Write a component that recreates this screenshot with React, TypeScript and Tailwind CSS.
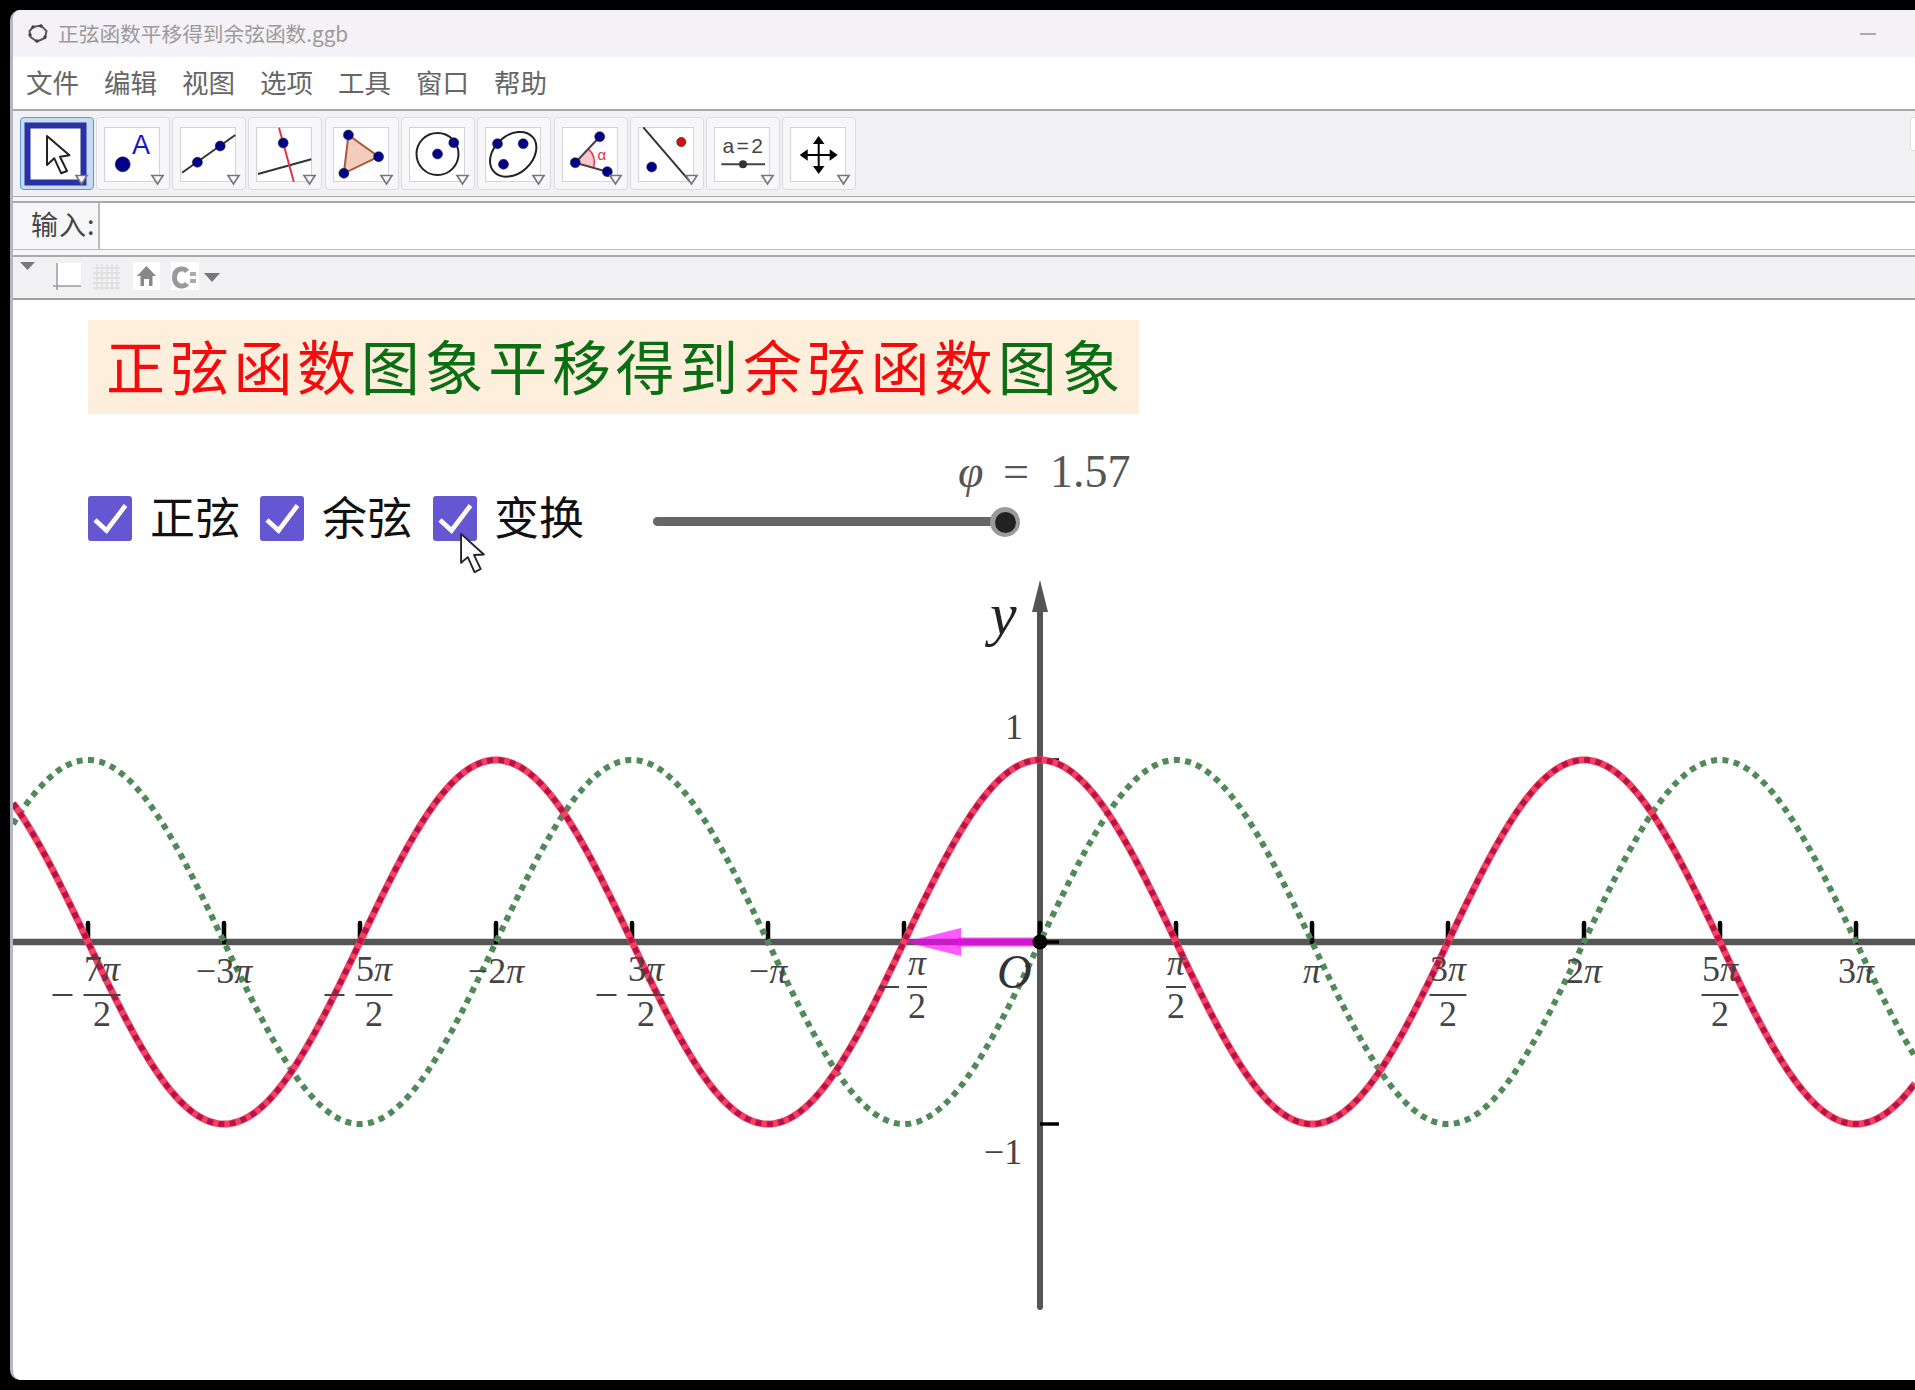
import React from "react";

const CJK = "font-['Noto_Sans_CJK_SC',sans-serif]";
const SERIF = "'Liberation Serif', serif";

const OX = 1040;
const OY = 942;
const UX = 272 / Math.PI;
const UY = 182;

const curve = (fn: (t: number) => number) => {
  let d = "";
  for (let x = 13; x <= 1915; x += 2) {
    const y = OY - UY * fn((x - OX) / UX);
    d += (d ? "L" : "M") + x + " " + y.toFixed(1);
  }
  return d;
};

const Dot = ({ x, y, r = 5 }: { x: number; y: number; r?: number }) => (
  <circle cx={x} cy={y} r={r} fill="#00008b" stroke="#333" strokeWidth={0.6} />
);

const icons: React.ReactNode[] = [
  <path
    key="move"
    d="M27 19V48L34.3 41.3L41.2 56.3L47 54L40 39.7L49.4 38.3Z"
    fill="#fff"
    stroke="#222"
    strokeWidth={2}
    strokeLinejoin="round"
  />,
  <g key="point">
    <Dot x={26.7} y={47.3} r={7.5} />
    <text x={36} y={37} fontSize={27} fill="#1414d2" fontFamily="'Liberation Sans', sans-serif">A</text>
  </g>,
  <g key="line">
    <path d="M10 55.7L63.3 18" stroke="#333" strokeWidth={2} />
    <Dot x={25.4} y={45.3} />
    <Dot x={48.2} y={29} />
  </g>,
  <g key="perp">
    <path d="M10 57L63.3 42.3" stroke="#333" strokeWidth={2} />
    <path d="M31 10.7L45.8 64.7" stroke="#e8304a" strokeWidth={2} />
    <Dot x={35.2} y={26} />
  </g>,
  <g key="poly">
    <path d="M23.4 18L53.6 39.7L18.9 56.3Z" fill="#f1cdbc" stroke="#a85a3a" strokeWidth={2} />
    <Dot x={23.4} y={18} />
    <Dot x={53.6} y={39.7} />
    <Dot x={18.9} y={56.3} />
  </g>,
  <g key="circle">
    <circle cx={36.5} cy={37} r={21} fill="none" stroke="#222" strokeWidth={2} />
    <Dot x={36.5} y={37} />
    <Dot x={52.8} y={25.7} />
  </g>,
  <g key="conic">
    <ellipse cx={36.2} cy={37.3} rx={26} ry={19} transform="rotate(-42 36.2 37.3)" fill="none" stroke="#222" strokeWidth={2} />
    <Dot x={20.5} y={26.7} />
    <Dot x={46.2} y={26.7} />
    <Dot x={26.5} y={47.3} />
  </g>,
  <g key="angle">
    <path d="M21.3 45.7L34.3 31.8A19 19 0 0 1 39.6 50.8Z" fill="#f8c6cc" />
    <path d="M34.3 31.8A19 19 0 0 1 39.6 50.8" fill="none" stroke="#e8304a" strokeWidth={1.5} />
    <path d="M45.7 19.7L21.3 45.7L53.3 54.7" fill="none" stroke="#444" strokeWidth={2} />
    <text x={43.5} y={43} fontSize={15} fill="#e8304a" fontFamily="'Liberation Sans', sans-serif">α</text>
    <Dot x={45.7} y={19.7} />
    <Dot x={21.3} y={45.7} />
    <Dot x={53.3} y={54.7} />
  </g>,
  <g key="mirror">
    <path d="M13.3 10.3L60 64.7" stroke="#333" strokeWidth={2} />
    <circle cx={51.3} cy={25} r={4.5} fill="#d61010" stroke="#602020" strokeWidth={0.8} />
    <Dot x={21.7} y={50} />
  </g>,
  <g key="slider">
    <text x={36.7} y={36} fontSize={21} textAnchor="middle" wordSpacing={-3.5} fill="#444" fontFamily="'Liberation Sans', sans-serif">a = 2</text>
    <path d="M15.3 47.3H59" stroke="#444" strokeWidth={2} />
    <circle cx={37} cy={47.3} r={4} fill="#333" />
  </g>,
  <g key="pan">
    <path d="M36.7 22V54M20.5 38H53" stroke="#000" strokeWidth={2} />
    <path d="M36.7 19L42.5 27H30.9ZM36.7 57L42.5 49H30.9ZM17.7 38L25.7 32.2V43.8ZM55.7 38L47.7 32.2V43.8Z" fill="#000" />
  </g>,
];

const ToolButton = ({ icon, active }: { icon: React.ReactNode; active?: boolean }) => (
  <div
    className={
      active
        ? "w-[74px] h-[73px] shrink-0 rounded-[4px] border border-[#5a9ad6] bg-[#c6dcf3]"
        : "w-[74px] h-[73px] shrink-0 rounded-[4px] border border-[#dcdce0] bg-[#f7f7f9]"
    }
  >
    <svg width="72" height="71" viewBox="1 1 72 71" fill="none">
      {active ? (
        <rect x="7.5" y="8.5" width="56" height="57" fill="#fff" stroke="#2a31a0" strokeWidth={6} />
      ) : (
        <rect x="8.5" y="10.5" width="55" height="54" fill="#fff" stroke="#d4d4d4" strokeWidth={1} />
      )}
      {icon}
      <path d="M56 58.5H67L61.5 67Z" fill="#fff" stroke="#777" strokeWidth={1.7} />
    </svg>
  </div>
);

const Check = () => (
  <div className="w-[44px] h-[45px] shrink-0 rounded-[3px] bg-[#6557d2]">
    <svg width="44" height="45" viewBox="0 0 44 45" fill="none">
      <path d="M7 24L18.5 34.5L37.5 9.5" stroke="#fff" strokeWidth={4.6} />
    </svg>
  </div>
);

const Label = ({ x, y, size = 36, children }: { x: number; y: number; size?: number; children: React.ReactNode }) => (
  <text x={x} y={y} fontSize={size} textAnchor="middle" fill="#444" fontFamily={SERIF}>
    {children}
  </text>
);

const Pi = ({ n }: { n?: string }) => (
  <>
    {n}
    <tspan fontStyle="italic">π</tspan>
  </>
);

const Frac = ({ x, n, neg, small }: { x: number; n?: string; neg?: boolean; small?: boolean }) => {
  const w = small ? 20 : 37;
  const bar = small ? 987 : 995;
  const cx = neg ? x + (small ? 13 : 14) : x;
  return (
    <g>
      {neg && <path d={`M${cx - w / 2 - (small ? 28 : 31)} ${bar}h20`} stroke="#444" strokeWidth={2} />}
      <Label x={cx} y={small ? 975 : 981}>
        <Pi n={n} />
      </Label>
      <path d={`M${cx - w / 2} ${bar}h${w}`} stroke="#444" strokeWidth={2} />
      <Label x={cx} y={small ? 1018 : 1026}>2</Label>
    </g>
  );
};

const Graph = () => {
  const ticks: number[] = [];
  for (let i = -7; i <= 6; i++) ticks.push(OX + i * 136);
  return (
    <svg className="absolute inset-0" width="1902" height="1080" viewBox="13 300 1902 1080" fill="none">
      <path d={`M13 ${OY}H1915`} stroke="#555" strokeWidth={6.5} />
      <path d={`M${OX} 1307V610`} stroke="#555" strokeWidth={6} strokeLinecap="round" />
      <path d={`M${OX} 580L1048 612H1032Z`} fill="#555" />
      {ticks.map((x) => (
        <path key={x} d={`M${x} 923V${OY}`} stroke="#000" strokeWidth={4.5} strokeLinecap="round" />
      ))}
      <path d={`M${OX} 760H1059M${OX} 1124H1059M${OX} ${OY}H1059`} stroke="#000" strokeWidth={3.5} />

      <path d={curve(Math.sin)} stroke="#4f8a58" strokeWidth={6} strokeDasharray="6 5.4" />
      <path d={curve(Math.cos)} stroke="#f5405f" strokeWidth={7} />
      <path d={curve(Math.cos)} stroke="#b5134a" strokeWidth={5.5} strokeDasharray="6 5.4" />

      <path d={`M958 ${OY}H${OX}`} stroke="#ff00ff" strokeOpacity={0.7} strokeWidth={9} />
      <path d={`M905 ${OY}L961 928V956Z`} fill="#ff00ff" fillOpacity={0.65} />
      <circle cx={OX} cy={OY} r={7.5} fill="#000" />

      <Frac x={88} n="7" neg />
      <Label x={224} y={983}>−<Pi n="3" /></Label>
      <Frac x={360} n="5" neg />
      <Label x={496} y={983}>−<Pi n="2" /></Label>
      <Frac x={632} n="3" neg />
      <Label x={768} y={983}>−<Pi /></Label>
      <Frac x={904} neg small />
      <Frac x={1176} small />
      <Label x={1312} y={983}><Pi /></Label>
      <Frac x={1448} n="3" />
      <Label x={1584} y={983}><Pi n="2" /></Label>
      <Frac x={1720} n="5" />
      <Label x={1856} y={983}><Pi n="3" /></Label>

      <text x={997} y={988} fontSize={48} fontStyle="italic" fill="#333" fontFamily={SERIF}>O</text>
      <text x={990} y={634} fontSize={60} fontStyle="italic" fill="#222" fontFamily={SERIF}>y</text>
      <Label x={1014} y={739}>1</Label>
      <Label x={1003} y={1164}>−1</Label>
    </svg>
  );
};

const red = "text-[#f40c0c]";
const green = "text-[#0a6e12]";

export default function App() {
  return (
    <div className="w-[1915px] h-[1390px] bg-black py-[10px] pl-[10px] overflow-hidden">
      <div className={`relative h-full flex flex-col border-l-[3px] border-[#b5b8c2] rounded-l-[10px] overflow-hidden bg-white ${CJK}`}>
        <div className="absolute left-[-3px] top-[1140px] h-[183px] w-[3px] bg-[#5b8fc0]" />

        {/* title bar */}
        <div className="h-[47px] shrink-0 bg-[#f4f2f7] flex items-center pl-[15px] pr-[39px]">
          <svg width="20" height="19" viewBox="0 0 20 19" fill="none">
            <path d="M5 3L13 1.5L18.5 7L17 14L9 17.5L2.5 13L1.5 7Z" stroke="#555" strokeWidth={2} />
            <circle cx="5" cy="3" r="1.7" fill="#444" />
            <circle cx="13" cy="2" r="1.7" fill="#444" />
            <circle cx="2" cy="11" r="1.7" fill="#444" />
            <circle cx="17" cy="13" r="1.7" fill="#444" />
            <circle cx="9" cy="17" r="1.7" fill="#444" />
          </svg>
          <span className="ml-[10px] text-[20.7px] leading-none text-[#9a9a9a]">正弦函数平移得到余弦函数.ggb</span>
          <div className="ml-auto w-[16px] h-[2px] bg-[#aaa]" />
        </div>

        {/* menu */}
        <div className="h-[52px] shrink-0 bg-white flex items-center gap-[25px] pl-[13px] pb-[2px] text-[26.5px] leading-none text-[#666]">
          {["文件", "编辑", "视图", "选项", "工具", "窗口", "帮助"].map((m) => (
            <span key={m}>{m}</span>
          ))}
        </div>

        {/* toolbar */}
        <div className="h-[88px] shrink-0 bg-[#f1f0f3] border-t-2 border-b border-t-[#a8a8a8] border-b-[#aaa] flex items-start pt-[6px] pl-[6.5px] gap-[2.3px]">
          {icons.map((ic, i) => (
            <ToolButton key={i} icon={ic} active={i === 0} />
          ))}
          <div className="ml-auto mr-[-8px] w-[13px] h-[34px] rounded-[3px] bg-white border border-[#ddd]" />
        </div>
        <div className="h-[4px] shrink-0 bg-[#f6f6f8]" />

        {/* input bar */}
        <div className="h-[49px] shrink-0 bg-white border-t-2 border-b border-t-[#aaa] border-b-[#bbb] flex">
          <div className="w-[85px] shrink-0 bg-[#f6f6f8] flex items-center pl-[18px] pb-[5px] text-[27px] tracking-[1px] leading-none text-[#444]">输入:</div>
          <div className="flex-1 border-l-2 border-[#bbb]" />
        </div>
        <div className="h-[5px] shrink-0 bg-[#f6f6f8]" />

        {/* graphics style bar */}
        <div className="h-[45px] shrink-0 bg-[#f1f0f3] border-t-2 border-b-2 border-t-[#aaa] border-b-[#a0a0a0] relative">
          <svg className="absolute left-0 top-0" width="240" height="41" viewBox="13 257 240 41" fill="none">
            <path d="M20 262H35L27.5 270Z" fill="#777" />
            <rect x="57" y="263" width="24" height="23" fill="#fff" />
            <path d="M57 263V290M53 286H81" stroke="#999" strokeWidth={1.5} />
            <path
              d="M93 268H120M93 273H120M93 278H120M93 283H120M93 288H120M97 264V290M102 264V290M107 264V290M112 264V290M117 264V290"
              stroke="#ddd"
              strokeWidth={1.4}
            />
            <rect x="133" y="262" width="27" height="28" fill="#fff" />
            <path d="M146.5 266L156 276H152.5V286H149V279H144V286H140.5V276H137Z" fill="#888" />
            <rect x="171" y="262" width="28" height="28" fill="#fff" />
            <path d="M187 271.5C184 267 174.500 268 174.500 277.500C174.500 287 184 288 187 283.500" stroke="#999" strokeWidth={5} />
            <rect x="190" y="272" width="6" height="4" fill="#aaa" />
            <rect x="190" y="279" width="6" height="4" fill="#aaa" />
            <path d="M204 273H220L212 282Z" fill="#777" />
          </svg>
        </div>

        {/* graphics view */}
        <div className="relative flex-1">
          <Graph />
          <div className="absolute left-[75px] top-[20px] w-[1051px] h-[94px] bg-[#fdefdc] flex items-center pl-[18px] pb-[6px] text-[59px] leading-none tracking-[4.7px]">
            <span className={red}>正弦函数</span>
            <span className={green}>图象平移得到</span>
            <span className={red}>余弦函数</span>
            <span className={green}>图象</span>
          </div>

          <div className="absolute left-[75px] top-[193px] flex items-center text-[45px] leading-none text-[#111]">
            <Check />
            <span className="ml-[18px] w-[110px] pb-[6px]">正弦</span>
            <Check />
            <span className="ml-[18px] w-[111px] pb-[6px]">余弦</span>
            <Check />
            <span className="ml-[17px] pb-[6px]">变换</span>
          </div>

          <div className="absolute left-[640px] top-[217px] w-[352px] h-[9px] rounded-full bg-[#666]" />
          <div className="absolute left-[977px] top-[207px] w-[30px] h-[30px] rounded-full bg-[#9a9a9a] flex items-center justify-center">
            <div className="w-[21px] h-[21px] rounded-full bg-[#222]" />
          </div>
          <div className="absolute left-[945px] top-[149px] flex items-baseline text-[46px] leading-none text-[#555] font-['Liberation_Serif',serif]">
            <span className="w-[45px] italic">φ</span>
            <span className="w-[47px]">=</span>
            <span>1.57</span>
          </div>

          <svg className="absolute left-[446px] top-[232px]" width="29" height="43" viewBox="0 0 28 40" fill="none">
            <path d="M2 1V29L8.5 23.5L15 38L21 35L14.5 21.5L24 21Z" fill="#fff" stroke="#222" strokeWidth={1.8} strokeLinejoin="round" />
          </svg>
        </div>
      </div>
    </div>
  );
}
